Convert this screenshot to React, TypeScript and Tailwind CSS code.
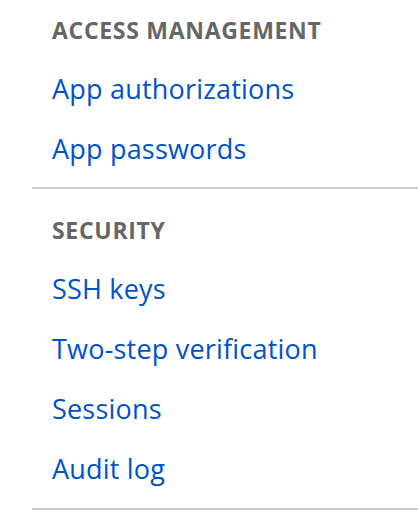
const sections = [
  {
    title: "ACCESS MANAGEMENT",
    links: ["App authorizations", "App passwords"],
  },
  {
    title: "SECURITY",
    links: ["SSH keys", "Two-step verification", "Sessions", "Audit log"],
  },
];

export default function App() {
  return (
    <div className="min-h-[524px] bg-white pl-8 font-['Open_Sans',sans-serif]">
      {sections.map((section, i) => (
        <div
          key={section.title}
          className={`border-b-2 border-[#cccccc] ${i === 0 ? "pt-[15px] pb-[8px]" : "pt-[26px] pb-[9px]"}`}
        >
          <h3 className="pl-5 text-[23px] leading-[30px] font-bold tracking-[0.7px] text-[#666666]">
            {section.title}
          </h3>
          <ul className="mt-[14px]">
            {section.links.map((link) => (
              <li key={link} className="h-[60px] pl-5">
                <a
                  href="#"
                  className="text-[27px] leading-[60px] tracking-[0.2px] text-[#0052cc]"
                >
                  {link}
                </a>
              </li>
            ))}
          </ul>
        </div>
      ))}
    </div>
  );
}
